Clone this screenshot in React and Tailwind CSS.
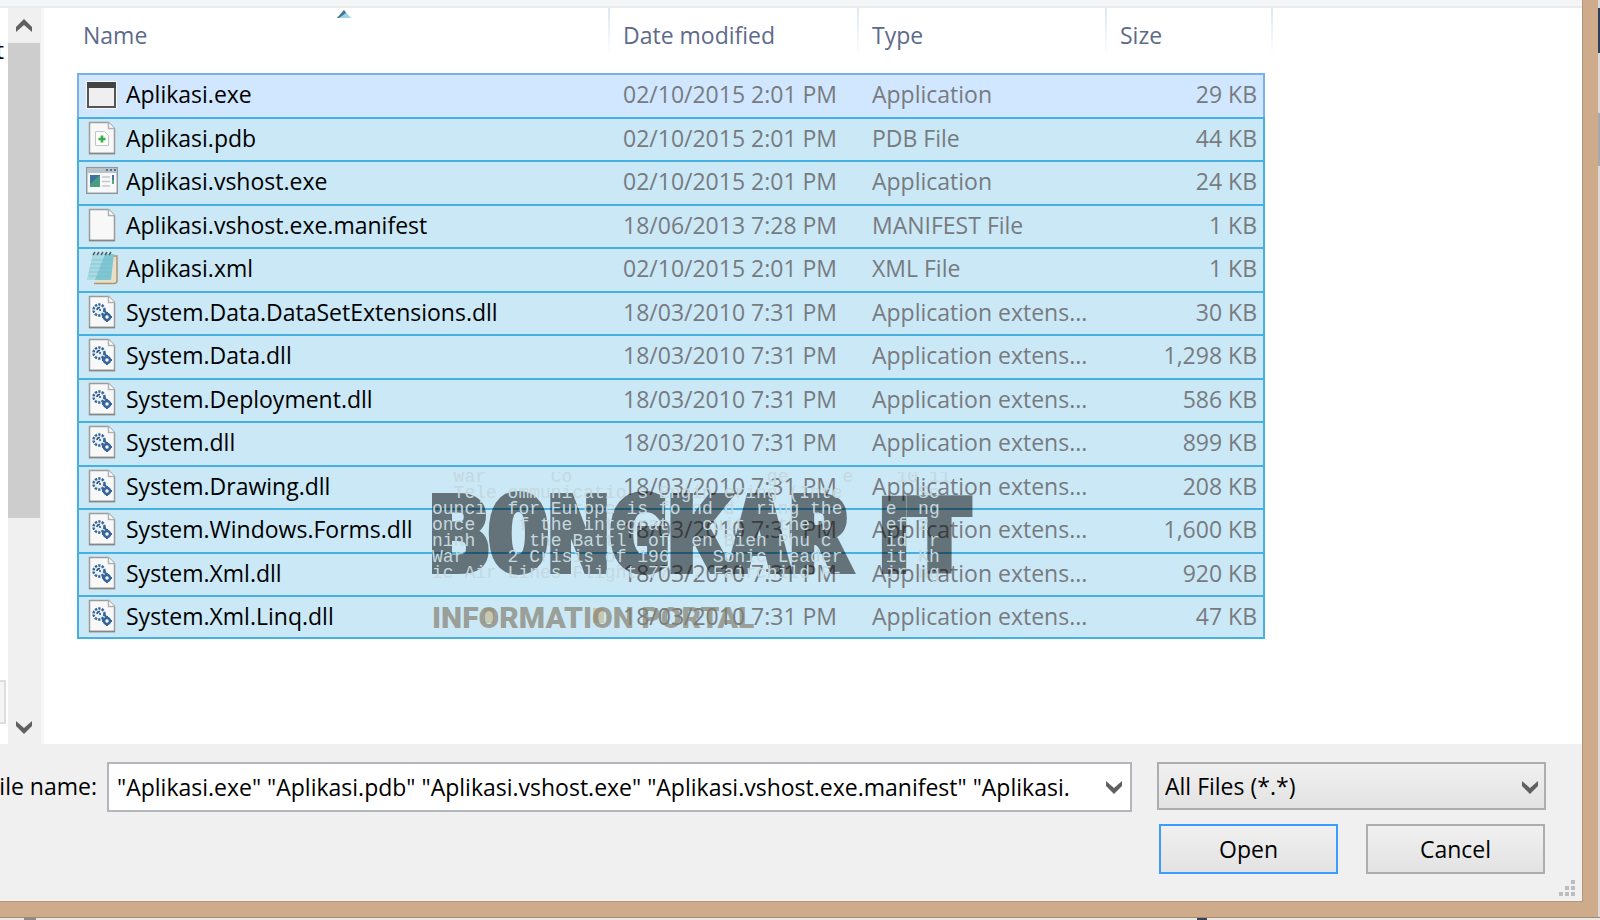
import { useState } from "react";
import clsx from "clsx";

const files = [
  { name: "Aplikasi.exe", date: "02/10/2015 2:01 PM", type: "Application", size: "29 KB", icon: "window" },
  { name: "Aplikasi.pdb", date: "02/10/2015 2:01 PM", type: "PDB File", size: "44 KB", icon: "pdb" },
  { name: "Aplikasi.vshost.exe", date: "02/10/2015 2:01 PM", type: "Application", size: "24 KB", icon: "app" },
  { name: "Aplikasi.vshost.exe.manifest", date: "18/06/2013 7:28 PM", type: "MANIFEST File", size: "1 KB", icon: "blank" },
  { name: "Aplikasi.xml", date: "02/10/2015 2:01 PM", type: "XML File", size: "1 KB", icon: "notepad" },
  { name: "System.Data.DataSetExtensions.dll", date: "18/03/2010 7:31 PM", type: "Application extens...", size: "30 KB", icon: "dll" },
  { name: "System.Data.dll", date: "18/03/2010 7:31 PM", type: "Application extens...", size: "1,298 KB", icon: "dll" },
  { name: "System.Deployment.dll", date: "18/03/2010 7:31 PM", type: "Application extens...", size: "586 KB", icon: "dll" },
  { name: "System.dll", date: "18/03/2010 7:31 PM", type: "Application extens...", size: "899 KB", icon: "dll" },
  { name: "System.Drawing.dll", date: "18/03/2010 7:31 PM", type: "Application extens...", size: "208 KB", icon: "dll" },
  { name: "System.Windows.Forms.dll", date: "18/03/2010 7:31 PM", type: "Application extens...", size: "1,600 KB", icon: "dll" },
  { name: "System.Xml.dll", date: "18/03/2010 7:31 PM", type: "Application extens...", size: "920 KB", icon: "dll" },
  { name: "System.Xml.Linq.dll", date: "18/03/2010 7:31 PM", type: "Application extens...", size: "47 KB", icon: "dll" },
];

const logoLines = [
  "  War      Co                  ge     e    10 11",
  "  Tele ommunicatio s Engin ering (Inte       Sc",
  "ounci  for Europe is fo nd d  ring the    e  ng",
  "once    f the integrat   cuit   the b     ef 2",
  "ninh     the Battl  of  en Bien Phu c     id  r",
  "War    2 Crisis of 196  - Sonic Leader    it Kh",
  "ic Air Lines Flight 77  . Fairchild F-    ir ng",
];

function Page({ children }) {
  return (
    <>
      <path d="M3.5 1.5h19l6 6v25h-25z" fill="#f8f8f8" stroke="#9b9c9d" strokeWidth="1.5" />
      <path d="M3 32.5h26" stroke="#858687" strokeWidth="1.5" />
      <path d="M22.5 1.5v6h6" fill="#fff" stroke="#b0b1b2" strokeWidth="1.5" />
      {children}
    </>
  );
}

function FileIcon({ kind }) {
  return (
    <svg viewBox="0 0 32 34" className="h-[34px] w-8 shrink-0" aria-hidden="true">
      {kind === "window" && (
        <>
          <rect x="0" y="4" width="31" height="28" fill="#f6f8fa" />
          <rect x="2" y="6" width="27" height="24" fill="#efeff1" stroke="#555" strokeWidth="2" />
          <path d="M1 5h29v6H1z" fill="#434343" />
        </>
      )}
      {kind === "pdb" && (
        <Page>
          <path d="M9.5 10.5h9l4 4v10h-13z" fill="#fdfdfd" stroke="#c3c4c5" />
          <path d="M12.5 18h7M16 14.5v7" stroke="#35ad45" strokeWidth="2.5" />
        </Page>
      )}
      {kind === "app" && (
        <>
          <rect x="0.7" y="3.7" width="30.6" height="25.6" fill="#f6f8f9" stroke="#92969d" strokeWidth="1.5" />
          <path d="M1 4h30v5H1z" fill="#bac2cb" />
          <path d="M20 6h2M24 6h2M28 6h2" stroke="#56718e" strokeWidth="2" />
          <path d="M4 11h10v12H4z" fill="#4a9c83" />
          <path d="M4 11h10L4 20z" fill="#3d72a0" />
          <path d="M16 13h8M16 17.5h8M16 22h8" stroke="#c3c8cb" strokeWidth="1.5" />
          <path d="M27 11v5" stroke="#4676a8" strokeWidth="2" />
          <path d="M27 16v4" stroke="#58a974" strokeWidth="2" />
        </>
      )}
      {kind === "blank" && <Page />}
      {kind === "notepad" && (
        <>
          <path d="M8 32.5h20q3 0 3-3V5h-5" fill="#e9dfc8" stroke="#ab9670" strokeWidth="1.5" />
          <path d="M7 3h21l-3 26H1z" fill="#7fc6d3" />
          <path d="M7 3h12L9 29H1z" fill="#a9dbe4" />
          <path d="M6 9h20M5 13h20M4 17h21M3 21h21M3 25h21" stroke="#74b9c8" strokeOpacity="0.6" />
          <path d="M7 4l2-3M11 4l2-3M15 4l2-3M19 4l2-3M23 4l2-3" stroke="#4c5c64" strokeWidth="1.5" />
        </>
      )}
      {kind === "dll" && (
        <Page>
          <circle cx="13" cy="15" r="5.5" fill="#e9f0f7" stroke="#36659b" strokeWidth="2.5" strokeDasharray="2.3 1.2" />
          <path d="M11 15q0-2.5 3-2.5M14 14v2" fill="none" stroke="#264f80" strokeWidth="1.5" />
          <path d="M16 19l3 3M18 15l4 5" stroke="#36659b" strokeWidth="2" />
          <circle cx="21" cy="22" r="3" fill="#fff" stroke="#36659b" strokeWidth="2.5" />
          <path d="M21 17v2M21 25v2M16 22h2M24 22h2" stroke="#36659b" strokeWidth="2" />
        </Page>
      )}
    </svg>
  );
}

function Chevron({ up }) {
  return (
    <svg viewBox="0 0 16 14" className={clsx("h-3.5 w-4", up && "rotate-180")} aria-hidden="true">
      <path d="M0 1l8 7 8-7v5l-8 8-8-8z" fill="#606060" />
    </svg>
  );
}

function ColumnLine() {
  return <span className="absolute top-0 right-0 h-12 w-0.5 bg-linear-to-b from-[#dbe7f6] to-white" />;
}

function Watermark() {
  return (
    <svg viewBox="0 0 560 170" className="pointer-events-none absolute top-[464px] left-[388px] h-[170px] w-[560px]">
      <g opacity="0.5" fontWeight="700" stroke="#000" strokeWidth="8">
        <text x="-4" y="98" fontSize="100" fontFamily="'DejaVu Sans Mono', monospace">
          BONGKAR
        </text>
        <text x="446" y="98" fontSize="96" fontFamily="'DejaVu Sans Condensed', 'DejaVu Sans', sans-serif">
          IT
        </text>
      </g>
      <g fill="#c4d8df" fontSize="18" fontFamily="'Liberation Mono', monospace">
        {logoLines.map((line, i) => (
          <text key={line} x="0" y={10 + i * 16} className="whitespace-pre">
            {line}
          </text>
        ))}
      </g>
      <path d="M52 136h10v15H52zM161 136h11v15h-11z" fill="#c9c8b2" />
      <text x="0" y="156" fontSize="30" fontWeight="900" fontFamily="Roboto, sans-serif" fill="#85806f" fillOpacity="0.7">
        INFORMATION PORTAL
      </text>
    </svg>
  );
}

function FileTable() {
  return (
    <table className="w-[1196px] table-fixed border-separate border-spacing-0 text-left whitespace-nowrap">
      <colgroup>
        <col className="w-[533px]" />
        <col className="w-[249px]" />
        <col className="w-[248px]" />
        <col className="w-[158px]" />
        <col className="w-2" />
      </colgroup>
      <thead className="align-top text-[#5d6b8a]">
        <tr className="h-[65px]">
          <th className="relative px-1.5 pt-[11px] font-normal">
            Name
            <svg viewBox="0 0 14 8" className="absolute top-0.5 left-1/2 h-2 w-3.5 -translate-x-1/2" aria-hidden="true">
              <path d="M0 8l7-8 7 8z" fill="#9fd0e6" />
              <path d="M0 8l7-8 2 3-7 5z" fill="#3f7791" />
            </svg>
            <ColumnLine />
          </th>
          <th className="relative px-[13px] pt-[11px] font-normal">
            Date modified
            <ColumnLine />
          </th>
          <th className="relative px-[13px] pt-[11px] font-normal">
            Type
            <ColumnLine />
          </th>
          <th className="px-[13px] pt-[11px] font-normal">Size</th>
          <td className="relative">
            <ColumnLine />
          </td>
        </tr>
      </thead>
      <tbody className="align-top leading-[34px] text-[#777b80]">
        {files.map((file, i) => {
          const cell = clsx(
            "border-t-2 pt-0.5",
            i === 0 ? "border-[#79b1ec] bg-[#d1e7ff]" : "border-[#45b0e2] bg-[#cbe8f6]",
            i === files.length - 1 && "border-b-2"
          );
          return (
            <tr key={file.name} className="odd:h-11 even:h-[43px]">
              <td className={clsx(cell, "border-l-2")}>
                <div className="flex items-center gap-2 pl-[7px] text-black">
                  <FileIcon kind={file.icon} />
                  {file.name}
                </div>
              </td>
              <td className={cell}>
                <div className="px-[13px]">{file.date}</div>
              </td>
              <td className={cell}>
                <div className="px-[13px]">{file.type}</div>
              </td>
              <td className={clsx(cell, "border-r-2")}>
                <div className="pr-1.5 text-right">{file.size}</div>
              </td>
            </tr>
          );
        })}
      </tbody>
    </table>
  );
}

export default function App() {
  const [fileName, setFileName] = useState(
    '"Aplikasi.exe" "Aplikasi.pdb" "Aplikasi.vshost.exe" "Aplikasi.vshost.exe.manifest" "Aplikasi.'
  );

  return (
    <div className="flex min-h-screen flex-col overflow-hidden bg-[#ebe9e5] font-['Open_Sans',sans-serif] text-[23px] leading-8 text-black">
      <div className="flex flex-1">
        <div className="flex flex-1 border-r-15 border-b-15 border-[#cdab8b]">
          <div className="flex flex-1 flex-col border-r border-b border-[#b3957a]">
            <div className="h-2 border-b-2 border-[#ebebeb] bg-[#f4f5f7]" />

            <main className="flex flex-1 bg-white">
              <nav className="flex w-2 flex-col justify-between overflow-hidden pt-[26px] pb-5">
                <span className="flex justify-end pr-1">t</span>
                <span className="h-11 w-1.5 border-y-2 border-r-2 border-[#dedede] bg-[#f5f5f5]" />
              </nav>
              <div className="flex w-[33px] flex-col bg-[#f0f0f0]">
                <button type="button" aria-label="Scroll up" className="flex h-[35px] w-8 items-center justify-center">
                  <Chevron up />
                </button>
                <div className="h-[475px] w-8 bg-[#cdcdcd]" />
                <button type="button" aria-label="Scroll down" className="mt-auto flex h-[35px] w-8 items-center justify-center">
                  <Chevron />
                </button>
              </div>
              <div className="relative flex-1 border-l-3 border-[#f7f7f7] pl-[33px]">
                <FileTable />
                <Watermark />
              </div>
            </main>

            <footer className="relative flex flex-col gap-3 bg-[#f0f0f0] pt-[18px] pr-9 pb-[27px]">
              <div className="flex items-start">
                <label htmlFor="file-name" className="flex h-12 w-[97px] items-center justify-end overflow-hidden whitespace-nowrap">
                  File name:
                </label>
                <div className="ml-2.5 flex h-[50px] flex-1 items-center border-2 border-[#b2b5bc] bg-white">
                  <input
                    id="file-name"
                    value={fileName}
                    onChange={(e) => setFileName(e.target.value)}
                    className="min-w-0 flex-1 bg-transparent pl-2 outline-none"
                  />
                  <button type="button" aria-label="Previous file names" className="px-2">
                    <Chevron />
                  </button>
                </div>
                <div className="relative ml-[25px] w-[389px]">
                  <select
                    aria-label="File type"
                    className="h-12 w-full appearance-none border-2 border-[#adadad] bg-linear-to-b from-[#f0f0f0] to-[#e3e3e3] px-1.5"
                  >
                    <option>All Files (*.*)</option>
                  </select>
                  <span className="pointer-events-none absolute top-[18px] right-2 flex">
                    <Chevron />
                  </span>
                </div>
              </div>
              <div className="flex justify-end gap-7 pr-px">
                <button
                  type="button"
                  className="h-[50px] w-[179px] border-2 border-[#3c9cff] bg-linear-to-b from-[#f0f0f0] to-[#e3e3e3]"
                >
                  Open
                </button>
                <button
                  type="button"
                  className="h-[50px] w-[179px] border-2 border-[#adadad] bg-linear-to-b from-[#f0f0f0] to-[#e3e3e3]"
                >
                  Cancel
                </button>
              </div>
              <svg viewBox="0 0 18 18" className="absolute right-1.5 bottom-1 h-[18px] w-[18px]" fill="#bdbdbd" aria-hidden="true">
                <path d="M13 1h4v4h-4zM7 7h4v4H7zM13 7h4v4h-4zM1 13h4v4H1zM7 13h4v4H7zM13 13h4v4h-4z" />
              </svg>
            </footer>
          </div>
        </div>
        <div className="w-0.5 bg-[#dcdad8] pt-2">
          <div className="h-[45px] bg-[#2f3e58]" />
          <div className="mt-[60px] h-[53px] bg-[#a8a9ac]" />
        </div>
      </div>
      <div className="flex h-[3px] border-t border-[#a58a71] pl-6">
        <div className="w-3 bg-[#8d8c8a]" />
        <div className="ml-[1161px] w-2.5 bg-[#33435c]" />
      </div>
    </div>
  );
}
